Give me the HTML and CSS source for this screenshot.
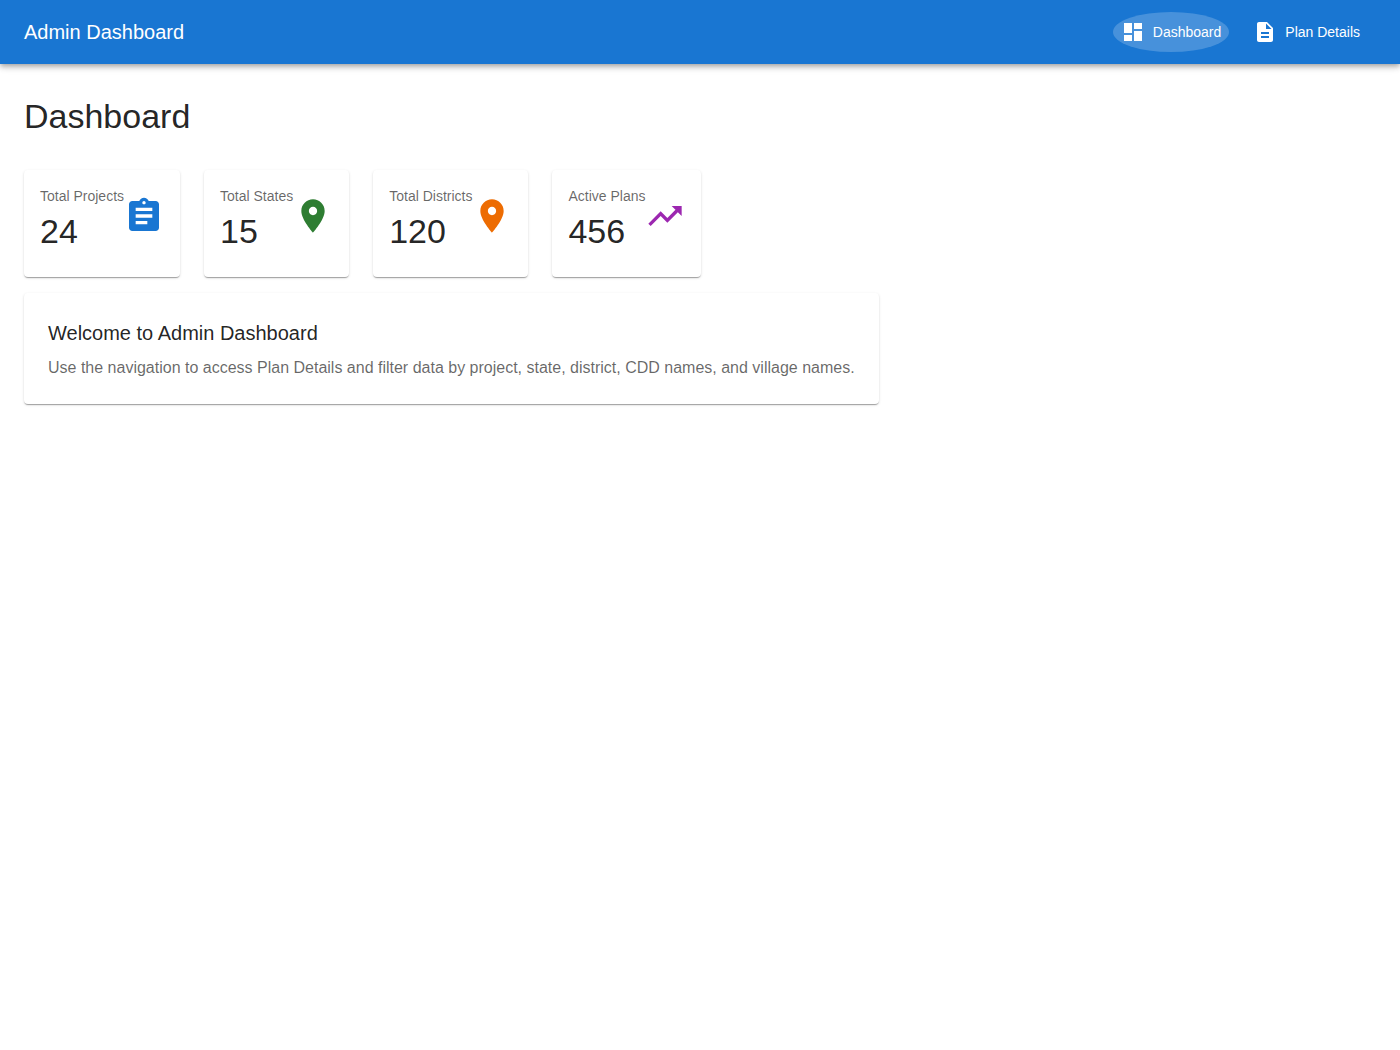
FILE: index.html
```html
<!DOCTYPE html>
<html lang="en">
<head>
<meta charset="utf-8">
<meta name="viewport" content="width=device-width, initial-scale=1">
<title>Admin Dashboard</title>
<link rel="stylesheet" href="styles.css">
</head>
<body>
<header class="app-bar">
  <div class="app-title">Admin Dashboard</div>
  <nav class="nav" aria-label="Main">
    <a class="nav-link nav-link-active" href="#dashboard" aria-current="page">
      <svg class="nav-icon" viewBox="0 0 24 24" aria-hidden="true"><path d="M3 13h8V3H3zm0 8h8v-6H3zm10 0h8V11h-8zm0-18v6h8V3z"/></svg>
      <span>Dashboard</span>
    </a>
    <a class="nav-link" href="#plan-details">
      <svg class="nav-icon" viewBox="0 0 24 24" aria-hidden="true"><path d="M14 2H6c-1.100 0-1.990.9-1.990 2L4 20c0 1.100.890 2 1.990 2H18c1.100 0 2-.9 2-2V8zm2 16H8v-2h8zm0-4H8v-2h8zm-3-5V3.500L18.500 9z"/></svg>
      <span>Plan Details</span>
    </a>
  </nav>
</header>
<main class="content">
  <h1 class="page-title">Dashboard</h1>
  <section class="stats" aria-label="Statistics">
    <article class="card stat">
      <div>
        <p class="stat-label">Total Projects</p>
        <p class="stat-value">24</p>
      </div>
      <svg class="stat-icon blue" viewBox="0 0 24 24" aria-hidden="true"><path d="M19 3h-4.180C14.400 1.840 13.300 1 12 1s-2.400.840-2.820 2H5c-1.100 0-2 .9-2 2v14c0 1.100.9 2 2 2h14c1.100 0 2-.9 2-2V5c0-1.100-.9-2-2-2m-7 0c.550 0 1 .450 1 1s-.450 1-1 1-1-.450-1-1 .450-1 1-1m2 14H7v-2h7zm3-4H7v-2h10zm0-4H7V7h10z"/></svg>
    </article>
    <article class="card stat">
      <div>
        <p class="stat-label">Total States</p>
        <p class="stat-value">15</p>
      </div>
      <svg class="stat-icon green" viewBox="0 0 24 24" aria-hidden="true"><path d="M12 2C8.130 2 5 5.130 5 9c0 5.250 7 13 7 13s7-7.750 7-13c0-3.870-3.130-7-7-7m0 9.500c-1.380 0-2.500-1.120-2.500-2.500s1.120-2.500 2.500-2.500 2.500 1.120 2.500 2.500-1.120 2.500-2.500 2.500"/></svg>
    </article>
    <article class="card stat">
      <div>
        <p class="stat-label">Total Districts</p>
        <p class="stat-value">120</p>
      </div>
      <svg class="stat-icon orange" viewBox="0 0 24 24" aria-hidden="true"><path d="M12 2C8.130 2 5 5.130 5 9c0 5.250 7 13 7 13s7-7.750 7-13c0-3.870-3.130-7-7-7m0 9.500c-1.380 0-2.500-1.120-2.500-2.500s1.120-2.500 2.500-2.500 2.500 1.120 2.500 2.500-1.120 2.500-2.500 2.500"/></svg>
    </article>
    <article class="card stat">
      <div>
        <p class="stat-label">Active Plans</p>
        <p class="stat-value">456</p>
      </div>
      <svg class="stat-icon purple" viewBox="0 0 24 24" aria-hidden="true"><path d="m16 6 2.290 2.290-4.880 4.880-4-4L2 16.590 3.410 18l6-6 4 4 6.300-6.290L22 12V6z"/></svg>
    </article>
  </section>
  <section class="card welcome">
    <h2 class="welcome-title">Welcome to Admin Dashboard</h2>
    <p class="welcome-text">Use the navigation to access Plan Details and filter data by project, state, district, CDD names, and village names.</p>
  </section>
</main>
</body>
</html>
```
FILE: styles.css
```css
* {
  box-sizing: border-box;
}

body {
  margin: 0;
  background: #fff;
  color: rgba(0, 0, 0, 0.87);
  font-family: "Liberation Sans", Arial, Helvetica, sans-serif;
  font-size: 16px;
  line-height: 24px;
}

h1,
h2,
p {
  margin: 0;
  font-weight: 400;
}

.app-bar {
  display: flex;
  align-items: center;
  justify-content: space-between;
  min-height: 64px;
  padding: 0 24px;
  background: #1976d2;
  color: #fff;
  box-shadow: 0 2px 4px -1px rgba(0, 0, 0, 0.2), 0 4px 5px 0 rgba(0, 0, 0, 0.14), 0 1px 10px 0 rgba(0, 0, 0, 0.12);
}

.app-title {
  font-size: 20px;
  line-height: 32px;
}

.nav {
  display: flex;
  gap: 16px;
  padding: 0 8px;
}

.nav-link {
  display: flex;
  align-items: center;
  gap: 8px;
  padding: 8px;
  border-radius: 50%;
  color: inherit;
  font-size: 14px;
  line-height: 20px;
  text-decoration: none;
}

.nav-link-active {
  background: rgba(255, 255, 255, 0.2);
}

.nav-icon {
  width: 24px;
  height: 24px;
  fill: currentColor;
}

.content {
  padding: 32px 24px;
}

.page-title,
.stat-value {
  padding-bottom: 2px;
  font-size: 34px;
  line-height: 40px;
}

.page-title {
  margin-bottom: 32px;
}

.stats {
  display: flex;
  flex-wrap: wrap;
  gap: 24px;
  margin-bottom: 16px;
}

.card {
  background: #fff;
  border-radius: 4px;
  box-shadow: 0 2px 1px -1px rgba(0, 0, 0, 0.2), 0 1px 1px 0 rgba(0, 0, 0, 0.14), 0 1px 3px 0 rgba(0, 0, 0, 0.12);
}

.stat {
  display: flex;
  align-items: center;
  padding: 16px 16px 24px;
}

.stat-label {
  margin-bottom: 5px;
  color: rgba(0, 0, 0, 0.6);
  font-size: 14px;
  line-height: 20px;
}

.stat-icon {
  flex: none;
  width: 40px;
  height: 40px;
  margin-bottom: 8px;
  fill: currentColor;
}

.blue {
  color: #1976d2;
}

.green {
  color: #2e7d32;
}

.orange {
  color: #ed6c02;
}

.purple {
  color: #9c27b0;
}

.welcome {
  width: fit-content;
  padding: 24px;
}

.welcome-title {
  margin-bottom: 7px;
  font-size: 20px;
  line-height: 32px;
}

.welcome-text {
  color: rgba(0, 0, 0, 0.6);
}
```
